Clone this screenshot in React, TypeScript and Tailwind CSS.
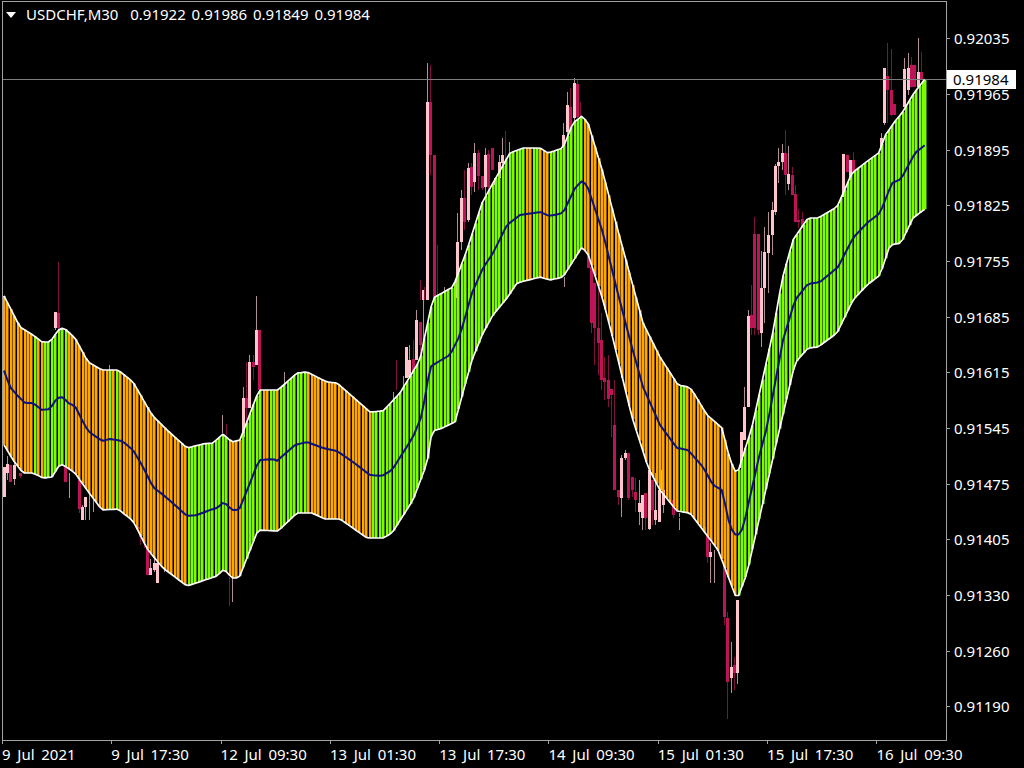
import React from "react";

type P = [number, number];
const upper: P[] = [[3,294],[20,327],[33,335],[42,342],[50,342],[60,328],[65,329],[75,338],[88,362],[102,370],[118,370],[133,382],[152,415],[167,430],[187,448],[203,444],[213,443],[223,434],[232,442],[240,440],[259,390],[278,390],[297,373],[307,372],[327,382],[337,383],[353,397],[370,412],[383,411],[400,393],[420,360],[424,340],[433,298],[453,287],[467,250],[482,203],[493,183],[510,153],[523,148],[540,148],[548,153],[563,148],[573,123],[582,116],[588,123],[603,173],[617,227],[643,323],[660,357],[678,385],[688,387],[692,390],[707,415],[722,428],[730,460],[737,475],[752,427],[772,337],[782,280],[793,240],[808,218],[818,218],[837,207],[852,173],[865,163],[880,152],[884,137],[896,120],[902,113],[914,93],[925,79]];
const mid: P[] = [[3,368],[10,387],[17,395],[25,403],[33,403],[42,410],[50,409],[57,398],[63,397],[68,403],[75,406],[82,420],[88,431],[102,441],[110,439],[122,441],[133,450],[143,467],[153,487],[167,498],[187,516],[197,515],[210,510],[217,508],[224,502],[232,510],[239,510],[250,483],[259,460],[273,459],[277,461],[295,445],[307,442],[323,448],[337,451],[353,462],[370,475],[382,476],[392,470],[413,437],[422,415],[430,367],[438,362],[450,355],[460,335],[472,293],[483,268],[493,253],[507,225],[520,215],[540,212],[549,216],[563,213],[575,188],[582,181],[587,185],[593,203],[603,233],[617,290],[630,340],[643,387],[660,425],[677,448],[688,450],[703,467],[713,485],[722,490],[730,527],[737,537],[743,528],[759,457],[767,427],[783,340],[795,300],[808,284],[820,282],[838,267],[853,238],[867,223],[880,213],[892,183],[901,179],[915,153],[925,145]];
const lower: P[] = [[3,443],[13,460],[23,473],[33,473],[43,478],[52,477],[60,464],[65,466],[75,473],[87,490],[102,510],[118,509],[133,521],[148,550],[163,568],[187,586],[217,576],[224,569],[232,578],[239,578],[258,530],[278,531],[297,513],[312,513],[325,519],[340,519],[367,538],[383,538],[392,533],[413,500],[427,463],[432,431],[440,429],[455,422],[465,385],[472,360],[483,333],[493,315],[507,298],[517,283],[540,277],[550,280],[563,277],[582,247],[588,254],[603,300],[612,335],[632,417],[648,467],[660,490],[677,511],[690,513],[703,530],[718,550],[725,568],[737,600],[747,573],[777,440],[795,363],[808,348],[818,347],[837,333],[853,300],[867,285],[880,275],[890,245],[901,243],[913,218],[925,209]];

const at = (pts: P[], x: number) => {
  for (let i = 1; i < pts.length; i++) {
    if (x <= pts[i][0]) {
      const [a, b] = pts[i - 1];
      const [c, d] = pts[i];
      return b + ((d - b) * (x - a)) / (c - a);
    }
  }
  return pts[pts.length - 1][1];
};

const STEP = 3.417;
const xs: number[] = [];
for (let x = 3; x <= 923; x += STEP) xs.push(x);
xs.push(923.6);

const orangeRanges: P[] = [[0,32.5],[36,44.5],[66,107],[111,116.5],[120,188],[227,241],[263.5,267.5],[275,278.5],[308,373],[527,531],[540,550],[585,680.5],[684.5,738]];
const isOrange = (x: number) => orangeRanges.some(([a, b]) => x + 1.2 >= a && x + 1.2 < b);

const line = (pts: P[]) => xs.map((x) => `${x + 1},${at(pts, x + 1).toFixed(1)}`).join(" ");

// x, wick top, wick bottom, body top, body bottom, up
type C = [number, number, number, number, number, number];
const candles: C[] = [
  [3,467,497,467,497,1],[6,456,480,464,473,1],[9,465,482,465,482,0],[13,457,485,465,479,1],[19,473,478,473,476,0],
  [54,312,330,312,328,1],[57,262,330,313,328,0],[64,467,482,467,482,0],[68,473,498,473,473,1],
  [78,480,513,480,509,0],[81,505,520,507,520,1],[84,497,520,497,507,1],[88,490,520,490,490,1],[92,500,512,500,500,1],
  [108,365,372,365,365,1],[137,527,530,527,529,0],[139,530,545,530,537,0],[143,540,548,540,540,0],[146,547,575,547,575,0],[149,559,575,568,575,1],[153,559,572,563,570,1],[156,560,583,563,583,1],[163,568,572,568,568,1],
  [221,415,433,415,415,1],[225,424,435,424,424,0],[228,577,606,577,577,0],[231,578,602,578,578,1],
  [242,387,437,398,437,1],[245,362,425,398,408,0],[248,355,408,362,408,1],[252,355,380,362,367,0],[255,296,365,330,365,1],[258,330,390,330,390,0],
  [283,372,385,372,372,1],[392,392,405,392,392,1],[395,360,390,360,360,0],[402,376,395,376,376,1],[405,347,378,347,378,1],[408,345,377,360,377,1],[412,340,372,359,372,0],[415,310,360,320,360,1],[419,322,355,322,345,0],[422,290,350,290,300,1],
  [419,280,300,280,280,0],[423,287,300,287,287,0],
  [426,63,300,102,300,1],[429,65,175,102,155,0],[433,155,300,155,300,0],[436,245,300,245,245,0],[443,287,300,287,287,1],
  [456,213,298,242,298,1],[460,190,250,198,242,1],[463,170,230,198,222,0],[467,163,222,168,220,1],[470,163,195,167,187,0],[473,143,192,153,182,1],[477,150,190,153,176,0],[481,176,190,176,188,0],[484,148,195,155,187,1],[487,150,195,154,187,0],[491,148,170,148,170,0],[494,178,190,178,185,1],[498,155,178,162,178,1],[501,138,165,155,163,1],[504,131,160,131,131,0],[508,142,156,142,142,1],
  [562,123,150,135,148,1],[566,92,137,105,132,1],[569,88,137,107,132,0],[573,78,124,83,118,1],[576,80,118,84,117,0],[579,102,117,102,102,0],[563,277,287,277,277,1],
  [587,253,268,253,268,0],[590,267,333,267,323,0],[593,283,365,283,328,0],[597,285,375,328,343,0],[600,313,390,340,380,0],[603,357,400,378,382,0],[607,355,407,380,399,0],[610,389,437,389,395,0],[613,380,490,425,490,0],[617,490,505,490,497,0],[620,455,517,458,498,1],[624,450,460,453,458,1],[627,453,500,453,498,0],[631,477,497,477,490,0],[634,478,512,492,500,0],[638,480,525,503,512,1],[641,495,530,495,518,1],[644,493,530,493,518,0],[648,470,530,470,529,1],[651,480,525,480,510,0],[654,473,525,510,520,1],[658,490,522,490,522,1],[661,470,490,470,490,1],[672,500,515,500,515,0],[678,518,530,518,518,1],
  [662,480,513,490,505,1],[672,508,518,508,508,0],[678,513,517,513,513,1],
  [703,527,532,527,532,0],[706,533,563,533,557,0],[709,543,583,552,557,1],[713,550,583,550,550,1],[723,560,625,560,617,0],[726,612,719,618,682,0],[730,642,693,667,678,1],[733,657,690,665,673,0],[736,600,684,600,673,1],
  [740,432,470,432,468,1],[743,387,432,407,432,1],[747,340,407,340,407,1],
  [743,387,440,407,440,1],[747,310,407,316,407,1],[750,285,335,315,328,0],[753,217,335,234,328,0],[757,234,335,234,330,0],[760,251,347,288,333,1],[763,227,323,252,288,1],[767,212,293,235,253,1],[771,202,255,210,235,1],[774,164,215,166,212,1],[777,148,183,162,166,1],[781,144,170,153,162,1],[784,130,195,153,175,0],[787,146,190,174,184,1],[791,167,195,175,195,0],[794,185,222,194,222,0],[797,209,228,220,222,0],[801,212,228,219,228,0],
  [842,154,197,154,197,1],[846,155,172,155,172,0],[849,160,178,160,178,1],[852,152,172,160,172,0],
  [880,133,150,138,150,1],[883,68,125,68,123,1],[886,43,123,76,90,0],[890,49,116,90,115,0],[893,104,115,104,115,0],[903,58,107,69,107,1],[907,53,95,68,90,1],[910,57,87,65,87,0],[913,65,87,65,87,0],[917,38,87,72,87,1],[920,52,80,72,80,0],
];

const prices = ["0.92035","0.91965","0.91895","0.91825","0.91755","0.91685","0.91615","0.91545","0.91475","0.91405","0.91330","0.91260","0.91190"];
const times = ["9 Jul 2021","9 Jul 17:30","12 Jul 09:30","13 Jul 01:30","13 Jul 17:30","14 Jul 09:30","15 Jul 01:30","15 Jul 17:30","16 Jul 09:30"];

export default function App() {
  return (
    <div className="relative w-[1024px] h-[768px] overflow-hidden bg-black text-white text-[15px] leading-none [word-spacing:2.8px] font-['Noto_Sans',sans-serif]">
      <div className="flex h-[741px]">
        <div className="mt-[1px] ml-[2px] w-[945px] h-[740px] border border-[#a3a3a3] shrink-0">
          <svg viewBox="3 2 943 738" className="block w-full h-full">
            {candles.map(([x, wt, wb, bt, bb, up], i) => (
              <g key={i}>
                <rect x={Math.round(x) + 1} y={wt} width={1} height={wb - wt} fill={up ? "#b08f95" : "#80103f"} />
                <rect x={Math.round(x)} y={bt} width={3} height={bb - bt} fill={up ? "#ffc4cc" : "#bd1458"} />
              </g>
            ))}
            {xs.map((x) => {
              const t = at(upper, x + 1);
              const b = at(lower, x + 1);
              return <rect key={x} x={Math.round(x)} y={t} width={2.5} height={b - t} fill={isOrange(x) ? "#ffa500" : "#7cfc00"} />;
            })}
            <rect x={3} y={79} width={943} height={1} fill="#7d7d7d" />
            <polyline points={line(upper)} fill="none" stroke="#ffffff" strokeWidth={1.7} strokeLinejoin="round" />
            <polyline points={line(lower)} fill="none" stroke="#ffffff" strokeWidth={1.7} strokeLinejoin="round" />
            <polyline points={line(mid)} fill="none" stroke="#0c1080" strokeWidth={2} strokeLinejoin="round" />
          </svg>
        </div>
        <div className="flex flex-col pt-[11px]">
          {prices.map((p) => (
            <div key={p} className="flex items-center h-[55.67px] shrink-0">
              <div className="w-[3px] h-px bg-[#a3a3a3]" />
              <span className="ml-[4px]">{p}</span>
            </div>
          ))}
        </div>
      </div>
      <div className="flex pl-[2px]">
        {times.map((t) => (
          <div key={t} className="w-[109.3px] shrink-0">
            <div className="w-px h-[3px] bg-[#a3a3a3]" />
            <div className="mt-[3px] whitespace-nowrap">{t}</div>
          </div>
        ))}
      </div>
      <div className="absolute left-[6px] top-[7px] flex items-center whitespace-pre [word-spacing:2px]">
        <svg width="10" height="6" viewBox="0 0 10 6" className="mr-[10px]">
          <polygon points="0,0 10,0 5,6" fill="#ffffff" />
        </svg>
        <span>USDCHF,M30  0.91922 0.91986 0.91849 0.91984</span>
      </div>
      <div className="absolute left-[947px] top-[70px] w-[69px] h-[19px] bg-white text-black flex items-center pl-[6px]">0.91984</div>
    </div>
  );
}
